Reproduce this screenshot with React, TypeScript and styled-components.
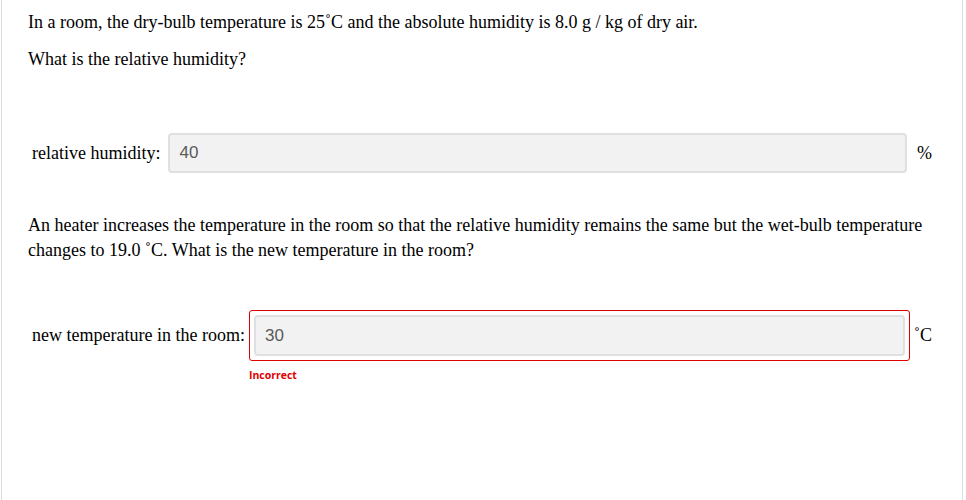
import React from "react";
import styled, { createGlobalStyle } from "styled-components";

const Global = createGlobalStyle`
  html, body { margin: 0; padding: 0; background: #fff; }
  body { font-family: "Liberation Serif", "Times New Roman", serif; color: #000; }
`;

const Panel = styled.div`
  box-sizing: border-box;
  margin-left: 1px;
  width: 962px;
  min-height: 520px;
  border-left: 1px solid #dcdcdc;
  border-right: 1px solid #dcdcdc;
  padding: 11px 30px 0 26px;
`;

const Para = styled.p<{ $lh: number; $mb: number }>`
  margin: 0 0 ${(p) => p.$mb}px;
  font-size: 18px;
  line-height: ${(p) => p.$lh}px;
`;

const Row = styled.div<{ $mt: number }>`
  display: flex;
  align-items: center;
  margin: ${(p) => p.$mt}px 0 0 4px;
`;

const Label = styled.label<{ $gap: number }>`
  font-size: 18px;
  white-space: nowrap;
  margin-right: ${(p) => p.$gap}px;
`;

const Field = styled.div`
  flex: 1;
  display: flex;
  flex-direction: column;
  position: relative;
`;

const ErrorFrame = styled.div`
  border: 1px solid #e00000;
  border-radius: 3px;
  padding: 4px;
  display: flex;
`;

const Input = styled.input<{ $h: number }>`
  box-sizing: border-box;
  display: block;
  width: 100%;
  height: ${(p) => p.$h}px;
  background: #f2f2f2;
  border: 2px solid #e0e0e0;
  border-radius: 4px;
  padding: 0 9px;
  margin: 0;
  font-family: "Liberation Sans", Arial, sans-serif;
  font-size: 17px;
  color: #5a5a5a;
  outline: none;
`;

const Unit = styled.span<{ $gap: number }>`
  font-size: 18px;
  margin-left: ${(p) => p.$gap}px;
`;

const Feedback = styled.div`
  position: absolute;
  left: 0;
  top: 100%;
  margin-top: 7px;
  font-family: "Open Sans", "Liberation Sans", sans-serif;
  font-weight: 700;
  font-size: 10.5px;
  color: #e00000;
`;

export default function App() {
  return (
    <>
      <Global />
      <Panel>
        <Para $lh={22} $mb={15}>
          In a room, the dry-bulb temperature is 25˚C and the absolute humidity is 8.0 g / kg of dry air.
        </Para>
        <Para $lh={22} $mb={0}>
          What is the relative humidity?
        </Para>
        <Row $mt={63}>
          <Label $gap={8}>relative humidity:</Label>
          <Field>
            <Input $h={40} defaultValue="40" readOnly />
          </Field>
          <Unit $gap={10}>%</Unit>
        </Row>
        <Para $lh={25} $mb={0} style={{ marginTop: 40 }}>
          An heater increases the temperature in the room so that the relative humidity remains the same but the wet-bulb temperature changes to 19.0 ˚C. What is the new temperature in the room?
        </Para>
        <Row $mt={47}>
          <Label $gap={4}>new temperature in the room:</Label>
          <Field>
            <ErrorFrame>
              <Input $h={41} defaultValue="30" readOnly />
            </ErrorFrame>
            <Feedback>Incorrect</Feedback>
          </Field>
          <Unit $gap={4}>˚C</Unit>
        </Row>
      </Panel>
    </>
  );
}
